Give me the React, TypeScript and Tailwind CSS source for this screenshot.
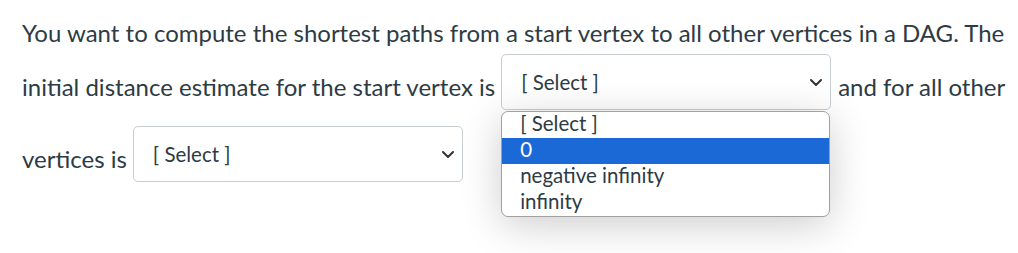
import React from 'react';

const Chevron = () => (
  <svg width="12" height="7" viewBox="0 0 12 7" fill="none" className="shrink-0">
    <path d="M1 1l5 5 5-5" stroke="#333" strokeWidth="2" strokeLinecap="round" strokeLinejoin="round" />
  </svg>
);

const SelectBox = ({ className = '' }: { className?: string }) => (
  <div
    className={`flex h-[56px] w-[330px] shrink-0 items-center justify-between rounded-[5px] border border-[#c8cdd1] bg-white pl-[19px] pr-[8px] ${className}`}
  >
    <span className="text-[20.5px] leading-[26px] text-[#2d3b45]">[ Select ]</span>
    <Chevron />
  </div>
);

const options = ['[ Select ]', '0', 'negative infinity', 'infinity'];

const App = () => {
  return (
    <div className="h-[253px] w-[1018px] overflow-hidden bg-white pl-[22px] font-['Lato','Liberation_Sans',sans-serif] text-[24px] text-[#2d3b45]">
      <p className="whitespace-nowrap pt-[18px] leading-[30px]">
        You want to compute the shortest paths from a start vertex to all other vertices in a DAG. The
      </p>

      <div className="mt-[6px] flex items-start whitespace-nowrap">
        <span className="mt-[18px] leading-[30px]">initial distance estimate for the start vertex is</span>
        <div className="relative ml-[6px]">
          <SelectBox />
          {/* open option list */}
          <div className="absolute left-0 top-[57px] z-10 w-[329px] overflow-hidden rounded-[7px] border-[1.5px] border-[#a0a0a0] bg-white shadow-[0_8px_40px_rgba(0,0,0,0.2)]">
            {options.map((opt) => (
              <div
                key={opt}
                className={`h-[26px] pl-[18px] text-[20.5px] leading-[23px] ${
                  opt === '0' ? 'bg-[#1b69d6] text-white' : 'text-[#2d3b45]'
                }`}
              >
                {opt}
              </div>
            ))}
          </div>
        </div>
        <span className="ml-[7px] mt-[18px] leading-[30px]">and for all other</span>
      </div>

      <div className="mt-[16px] flex items-start whitespace-nowrap">
        <span className="mt-[18px] leading-[30px]">vertices is</span>
        <SelectBox className="ml-[6px]" />
      </div>
    </div>
  );
};

export default App;
